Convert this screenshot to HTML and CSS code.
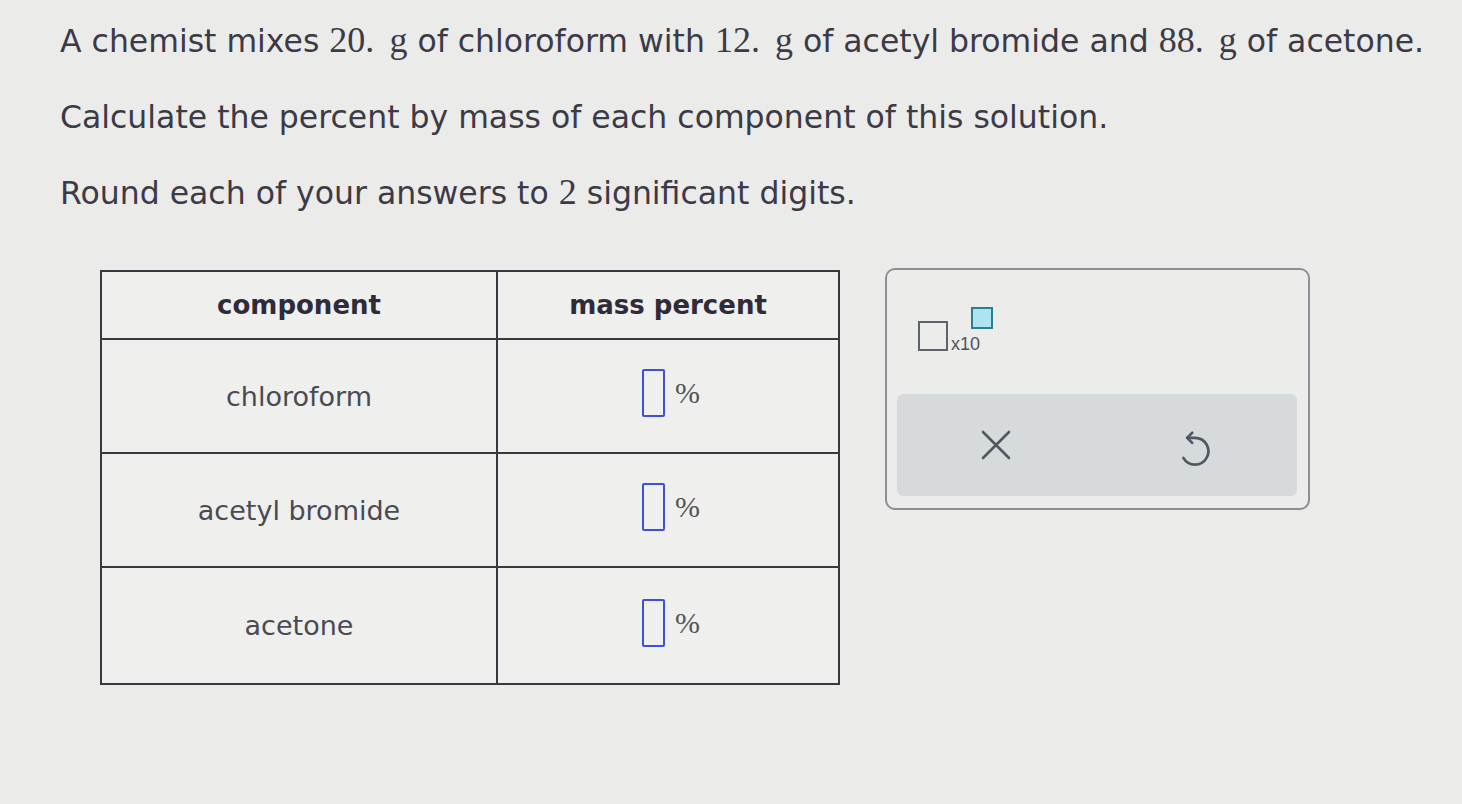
FILE: index.html
```html
<!DOCTYPE html>
<html>
<head>
<meta charset="utf-8">
<link rel="stylesheet" href="styles.css">
</head>
<body>
<div class="page">
  <p class="line l1">A chemist mixes <span class="num dot">20.</span> <span class="num">g</span> of chloroform with <span class="num dot">12.</span> <span class="num">g</span> of acetyl bromide and <span class="num dot">88.</span> <span class="num">g</span> of acetone.</p>
  <p class="line l2">Calculate the percent by mass of each component of this solution.</p>
  <p class="line l3">Round each of your answers to <span class="num">2</span> significant digits.</p>

  <div class="work">
    <table class="grid">
      <thead>
        <tr><th class="c1">component</th><th class="c2">mass percent</th></tr>
      </thead>
      <tbody>
        <tr><td>chloroform</td><td><span class="ans"><span class="box"></span><span class="pct">%</span></span></td></tr>
        <tr><td>acetyl bromide</td><td><span class="ans"><span class="box"></span><span class="pct">%</span></span></td></tr>
        <tr class="last"><td>acetone</td><td><span class="ans"><span class="box"></span><span class="pct">%</span></span></td></tr>
      </tbody>
    </table>

    <div class="panel">
      <div class="sci">
        <span class="base"></span><span class="x10">x10</span><span class="exp"></span>
      </div>
      <div class="actions">
        <svg class="ico ico-x" width="30" height="30" viewBox="0 0 30 30"><path d="M2 2 L28 28 M28 2 L2 28" stroke="#4f5862" stroke-width="2.6" fill="none" stroke-linecap="round"/></svg>
        <svg class="ico ico-undo" width="38" height="38" viewBox="0 0 34 34"><path d="M10 7 L17 7 A12 12 0 1 1 6.6 25" stroke="#4f5862" stroke-width="2.4" fill="none" stroke-linecap="round" stroke-linejoin="round"/><path d="M14.5 2.5 L10 7 L14.5 11.5" stroke="#4f5862" stroke-width="2.4" fill="none" stroke-linecap="round" stroke-linejoin="round"/></svg>
      </div>
    </div>
  </div>
</div>
</body>
</html>
```

FILE: styles.css
```css
html, body {
  margin: 0;
  padding: 0;
  background: #ebebea;
}
body {
  font-family: "DejaVu Sans", Verdana, sans-serif;
  color: #3b3a46;
}
.page {
  padding: 21px 0 0 60px;
  height: 783px;
  overflow: hidden;
}
.line {
  margin: 0;
  font-size: 31.5px;
  line-height: 40px;
  height: 40px;
  white-space: nowrap;
}
.l2 { margin-top: 36px; }
.l3 { margin-top: 36px; }
.num {
  font-family: "Liberation Serif", "Times New Roman", serif;
  font-size: 36px;
  line-height: 1;
}
.dot { margin-right: 5px; }
.work {
  display: flex;
  align-items: flex-start;
  margin-top: 57px;
  margin-left: 40px;
}
.grid {
  border-collapse: collapse;
  background: #efefee;
}
.grid th, .grid td {
  border: 2px solid #3c3640;
  text-align: center;
  font-size: 26px;
  padding: 0;
}
.grid th {
  height: 66px;
  font-weight: bold;
  color: #2f2b38;
}
.grid td {
  height: 112px;
  font-size: 27px;
  color: #4a4a52;
}
.grid .last td { height: 115px; }
.c1 { width: 394px; }
.c2 { width: 340px; }
.ans {
  display: inline-flex;
  align-items: center;
  gap: 10px;
  margin-left: 6px;
}
.box {
  display: inline-block;
  width: 19px;
  height: 44px;
  border: 2px solid #3f4fd8;
  border-radius: 2px;
}
.pct {
  font-family: "Liberation Serif", "Times New Roman", serif;
  font-size: 30px;
  color: #555;
}
.panel {
  margin-left: 45px;
  margin-top: -2px;
  width: 425px;
  height: 242px;
  border: 2px solid #8c9096;
  border-radius: 10px;
  box-sizing: border-box;
  background: #ececeb;
  padding: 37px 11px 12px 10px;
  display: flex;
  flex-direction: column;
}
.sci {
  display: flex;
  align-items: flex-start;
  margin-left: 21px;
  height: 50px;
}
.base {
  width: 26px;
  height: 26px;
  border: 2.5px solid #5e646c;
  margin-top: 14px;
}
.x10 {
  font-family: "Liberation Sans", Arial, sans-serif;
  font-size: 18px;
  line-height: 18px;
  color: #4e5259;
  margin-top: 28px;
  margin-left: 3px;
}
.exp {
  width: 18px;
  height: 18px;
  border: 2.5px solid #2a7f95;
  background: #aee3f0;
  margin-left: -9px;
}
.actions {
  margin-top: 37px;
  height: 102px;
  background: #d7dadb;
  border-radius: 6px;
  display: flex;
  align-items: center;
  padding-left: 84px;
  gap: 165px;
}
.ico { display: block; }
.ico-undo { margin-top: 8px; }
```
